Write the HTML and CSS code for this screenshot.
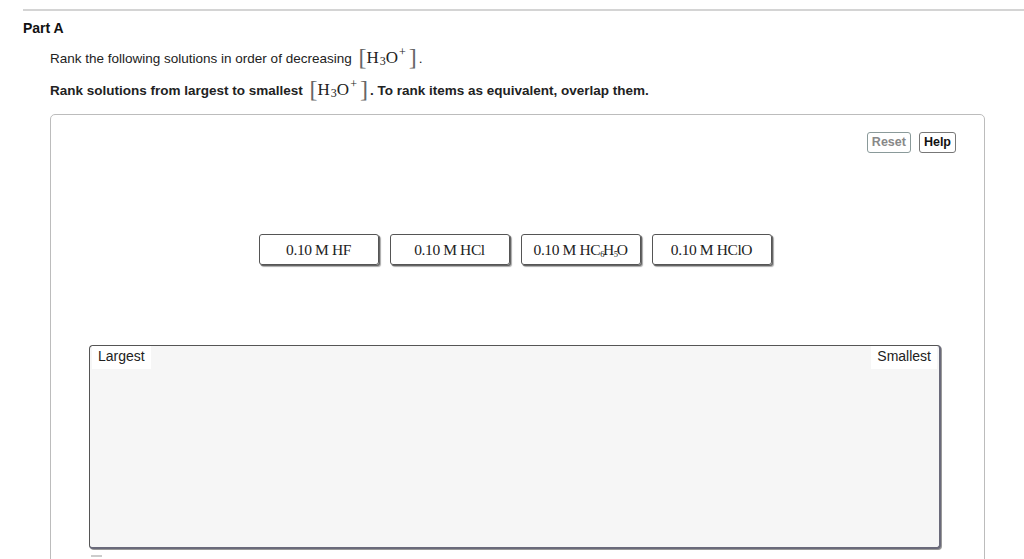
FILE: index.html
```html
<!DOCTYPE html>
<html>
<head>
<meta charset="utf-8">
<link rel="stylesheet" href="styles.css">
</head>
<body>
<div class="page">
  <div class="rule"></div>
  <h2 class="part">Part A</h2>
  <div class="content">
    <p class="q q1">Rank the following solutions in order of decreasing <span class="math"><span class="br">[</span>H<sub>3</sub>O<sup>+</sup><span class="br">]</span></span>.</p>
    <p class="q q2">Rank solutions from largest to smallest <span class="math"><span class="br">[</span>H<sub>3</sub>O<sup>+</sup><span class="br">]</span></span>. To rank items as equivalent, overlap them.</p>
    <div class="box">
      <div class="tools">
        <button class="btn reset">Reset</button>
        <button class="btn help">Help</button>
      </div>
      <div class="items">
        <div class="item">0.10 M HF</div>
        <div class="item">0.10 M HCl</div>
        <div class="item">0.10 M HC<sub>6</sub>H<sub>5</sub>O</div>
        <div class="item">0.10 M HClO</div>
      </div>
      <div class="target">
        <span class="lbl">Largest</span>
        <span class="lbl">Smallest</span>
      </div>
      <div class="stub"></div>
    </div>
  </div>
</div>
</body>
</html>
```
FILE: styles.css
```css
* { box-sizing: border-box; }
html, body { margin: 0; padding: 0; background: #fff; }
body { font-family: "Liberation Sans", Arial, sans-serif; color: #222; overflow: hidden; height: 559px; }
.page { padding-left: 23px; padding-top: 9px; }
.rule { height: 2px; background: #d4d4d4; }
.part { font-size: 14px; font-weight: bold; margin: 9px 0 0 0; line-height: 17px; color: #111; }
.content { padding-left: 27px; }
.q { font-size: 13.5px; margin: 0; line-height: 17px; color: #222; }
.q1 { height: 44px; padding-top: 12px; }
.q2 { height: 33px; padding-top: 0; font-weight: bold; }
.math { font-family: "Liberation Serif", "Times New Roman", serif; font-weight: normal; font-size: 17px; margin: 0 2px 0 3px; }
.math sub { font-size: 12px; vertical-align: -2px; line-height: 0; margin-left: 1px; }
.math sup { font-size: 12px; vertical-align: 7px; line-height: 0; margin-left: 1px; margin-right: 3px; }
.br { font-size: 24px; font-weight: 100; color: #666; vertical-align: -2px; line-height: 0; }
.box { margin-top: 0; width: 935px; height: 460px; border: 1px solid #bcbcbc; border-radius: 5px; }
.tools { display: flex; justify-content: flex-end; gap: 8px; padding: 17px 28px 0 0; }
.btn { font-family: "Liberation Sans", Arial, sans-serif; font-size: 12.5px; font-weight: bold; background: #fff; border: 1px solid #888; border-radius: 3px; padding: 0 4px; height: 21px; line-height: 19px; }
.reset { color: #888; border-color: #8a9a9a; }
.help { color: #111; border-color: #777; }
.items { display: flex; justify-content: center; gap: 11px; margin-top: 81px; padding-right: 5px; }
.item { width: 120px; height: 31px; border: 1px solid #555; border-radius: 3px; box-shadow: 1px 1px 0 #666, 2px 2px 1px #aaa; font-family: "Liberation Serif", "Times New Roman", serif; font-size: 15.5px; color: #222; display: flex; align-items: center; justify-content: center; letter-spacing: -0.4px; white-space: nowrap; }
.item sub { font-size: 8.5px; position: relative; top: 4px; vertical-align: baseline; line-height: 0; margin: 0 -1px 0 0; }
.target { margin: 80px 0 0 38px; width: 852px; height: 204px; background: #f6f6f6; border-left: 1px solid #555; border-top: 1px solid #555; border-right: 2px solid #6a6a7a; border-bottom: 2px solid #6a6a7a; border-radius: 4px; display: flex; justify-content: space-between; align-items: flex-start; padding: 0 2px; box-shadow: 1px 1px 0 #999; }
.lbl { background: #fff; font-size: 14px; color: #222; padding: 2px 6px 4px 6px; line-height: 17px; }
.stub { margin: 6px 0 0 40px; width: 11px; height: 2px; background: #ccc; }
```
